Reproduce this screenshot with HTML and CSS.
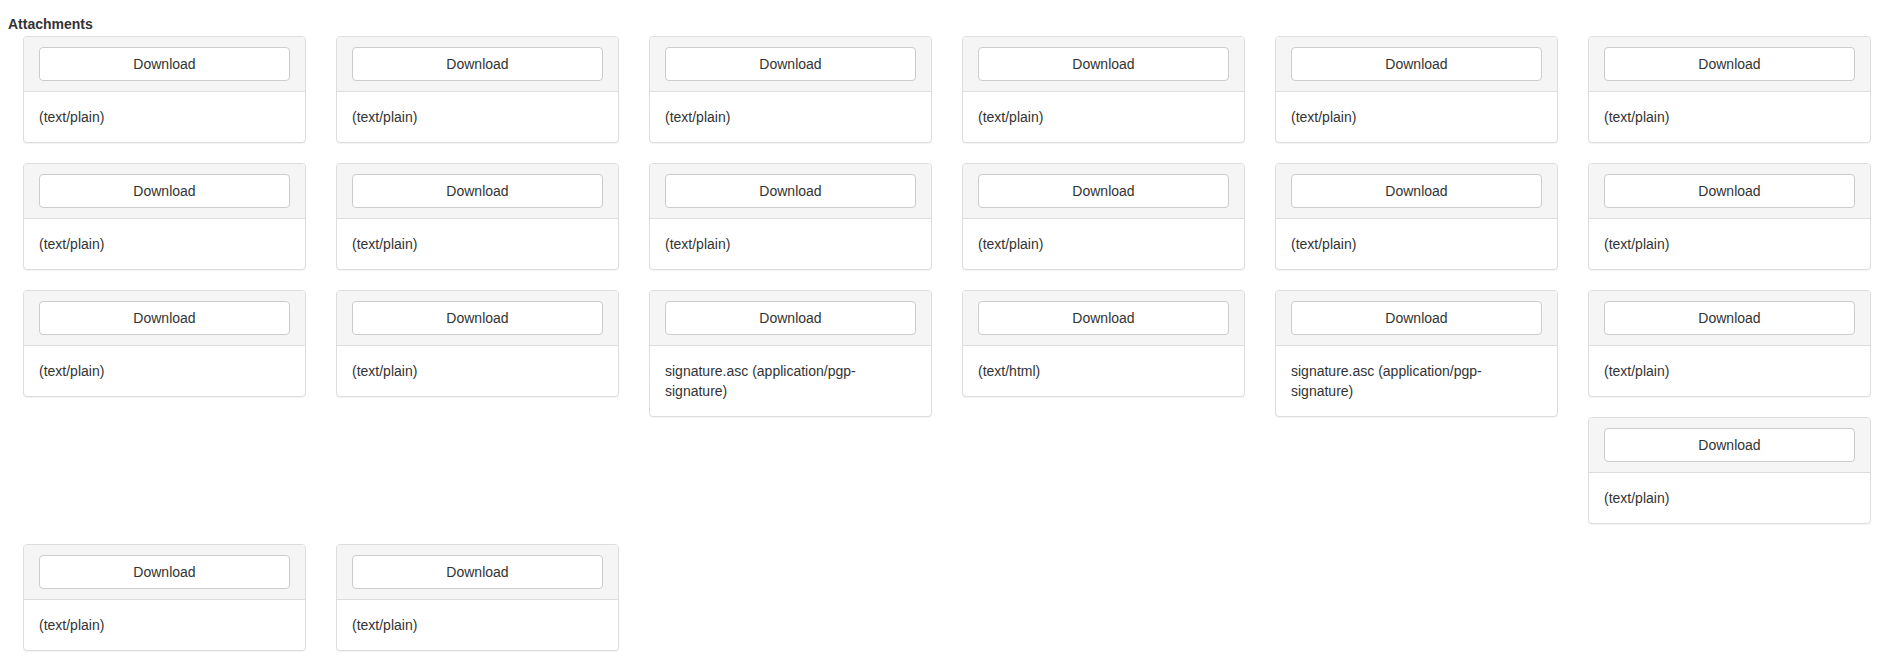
FILE: index.html
```html
<!DOCTYPE html>
<html lang="en">
  <head>
    <meta charset="UTF-8" />
    <meta name="viewport" content="width=device-width, initial-scale=1.0" />
    <title>Attachments</title>
    <link rel="stylesheet" href="styles.css">
  </head>
  <body>
    <h2 class="section-title">Attachments</h2>

    <div class="attachment-list">
      <div class="attachment">
        <div class="attachment-head"><a class="download-btn" href="#">Download</a></div>
        <div class="attachment-body">(text/plain)</div>
      </div>
      <div class="attachment">
        <div class="attachment-head"><a class="download-btn" href="#">Download</a></div>
        <div class="attachment-body">(text/plain)</div>
      </div>
      <div class="attachment">
        <div class="attachment-head"><a class="download-btn" href="#">Download</a></div>
        <div class="attachment-body">(text/plain)</div>
      </div>
      <div class="attachment">
        <div class="attachment-head"><a class="download-btn" href="#">Download</a></div>
        <div class="attachment-body">(text/plain)</div>
      </div>
      <div class="attachment">
        <div class="attachment-head"><a class="download-btn" href="#">Download</a></div>
        <div class="attachment-body">(text/plain)</div>
      </div>
      <div class="attachment">
        <div class="attachment-head"><a class="download-btn" href="#">Download</a></div>
        <div class="attachment-body">(text/plain)</div>
      </div>

      <div class="attachment">
        <div class="attachment-head"><a class="download-btn" href="#">Download</a></div>
        <div class="attachment-body">(text/plain)</div>
      </div>
      <div class="attachment">
        <div class="attachment-head"><a class="download-btn" href="#">Download</a></div>
        <div class="attachment-body">(text/plain)</div>
      </div>
      <div class="attachment">
        <div class="attachment-head"><a class="download-btn" href="#">Download</a></div>
        <div class="attachment-body">(text/plain)</div>
      </div>
      <div class="attachment">
        <div class="attachment-head"><a class="download-btn" href="#">Download</a></div>
        <div class="attachment-body">(text/plain)</div>
      </div>
      <div class="attachment">
        <div class="attachment-head"><a class="download-btn" href="#">Download</a></div>
        <div class="attachment-body">(text/plain)</div>
      </div>
      <div class="attachment">
        <div class="attachment-head"><a class="download-btn" href="#">Download</a></div>
        <div class="attachment-body">(text/plain)</div>
      </div>

      <div class="attachment">
        <div class="attachment-head"><a class="download-btn" href="#">Download</a></div>
        <div class="attachment-body">(text/plain)</div>
      </div>
      <div class="attachment">
        <div class="attachment-head"><a class="download-btn" href="#">Download</a></div>
        <div class="attachment-body">(text/plain)</div>
      </div>
      <div class="attachment">
        <div class="attachment-head"><a class="download-btn" href="#">Download</a></div>
        <div class="attachment-body">signature.asc (application/pgp-signature)</div>
      </div>
      <div class="attachment">
        <div class="attachment-head"><a class="download-btn" href="#">Download</a></div>
        <div class="attachment-body">(text/html)</div>
      </div>
      <div class="attachment">
        <div class="attachment-head"><a class="download-btn" href="#">Download</a></div>
        <div class="attachment-body">signature.asc (application/pgp-signature)</div>
      </div>
      <div class="attachment">
        <div class="attachment-head"><a class="download-btn" href="#">Download</a></div>
        <div class="attachment-body">(text/plain)</div>
      </div>

      <div class="attachment">
        <div class="attachment-head"><a class="download-btn" href="#">Download</a></div>
        <div class="attachment-body">(text/plain)</div>
      </div>
      <div class="attachment">
        <div class="attachment-head"><a class="download-btn" href="#">Download</a></div>
        <div class="attachment-body">(text/plain)</div>
      </div>
      <div class="attachment">
        <div class="attachment-head"><a class="download-btn" href="#">Download</a></div>
        <div class="attachment-body">(text/plain)</div>
      </div>
    </div>
  </body>
</html>
```

FILE: styles.css
```css
body {
  margin: 8px;
  font-family: "Liberation Sans", Arial, Helvetica, sans-serif;
  font-size: 14px;
  line-height: 20px;
  color: #333;
  background: #fff;
}

.section-title {
  margin: 6px 0 2px;
  font-size: 14px;
  line-height: 20px;
  font-weight: bold;
}

/* cards float like bootstrap columns, so a short card lets the next one tuck under it */
.attachment-list {
  display: flow-root;
  margin-left: -15px;
}

.attachment {
  float: left;
  box-sizing: border-box;
  width: 283px;
  margin: 0 0 20px 30px;
  background-color: #fff;
  border: 1px solid #ddd;
  border-radius: 4px;
  box-shadow: 0 1px 1px rgba(0, 0, 0, 0.05);
}

.attachment-head {
  padding: 10px 15px;
  background-color: #f5f5f5;
  border-bottom: 1px solid #ddd;
  border-radius: 3px 3px 0 0;
}

.download-btn {
  display: block;
  padding: 6px 12px;
  font-size: 14px;
  line-height: 20px;
  text-align: center;
  color: #333;
  text-decoration: none;
  background-color: #fff;
  border: 1px solid #ccc;
  border-radius: 4px;
}

.attachment-body {
  padding: 15px;
}
```
